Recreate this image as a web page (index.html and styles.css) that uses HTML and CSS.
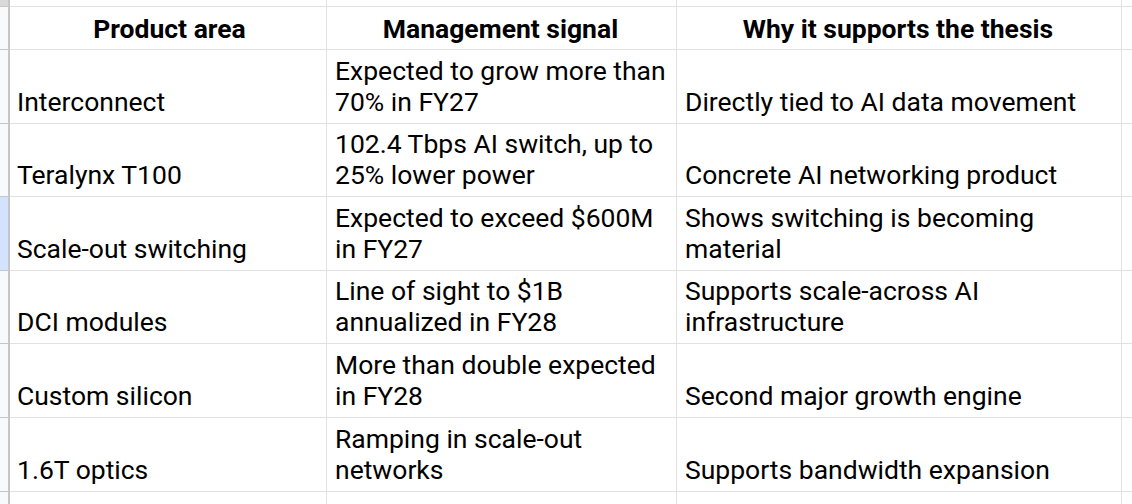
FILE: index.html
```html
<!DOCTYPE html>
<html>
<head>
<meta charset="utf-8">
<link rel="stylesheet" href="styles.css">
</head>
<body>
<div class="sheet">
  <div class="rh corner"></div><div class="c"></div><div class="c"></div><div class="c"></div><div class="c last"></div>

  <div class="rh"></div>
  <div class="c hd">Product area</div>
  <div class="c hd">Management signal</div>
  <div class="c hd">Why it supports the thesis</div>
  <div class="c last"></div>

  <div class="rh"></div>
  <div class="c">Interconnect</div>
  <div class="c">Expected to grow more than<br>70% in FY27</div>
  <div class="c">Directly tied to AI data movement</div>
  <div class="c last"></div>

  <div class="rh"></div>
  <div class="c">Teralynx T100</div>
  <div class="c">102.4 Tbps AI switch, up to<br>25% lower power</div>
  <div class="c">Concrete AI networking product</div>
  <div class="c last"></div>

  <div class="rh sel"></div>
  <div class="c">Scale-out switching</div>
  <div class="c">Expected to exceed $600M<br>in FY27</div>
  <div class="c">Shows switching is becoming<br>material</div>
  <div class="c last"></div>

  <div class="rh"></div>
  <div class="c">DCI modules</div>
  <div class="c">Line of sight to $1B<br>annualized in FY28</div>
  <div class="c">Supports scale-across AI<br>infrastructure</div>
  <div class="c last"></div>

  <div class="rh"></div>
  <div class="c">Custom silicon</div>
  <div class="c">More than double expected<br>in FY28</div>
  <div class="c">Second major growth engine</div>
  <div class="c last"></div>

  <div class="rh"></div>
  <div class="c">1.6T optics</div>
  <div class="c">Ramping in scale-out<br>networks</div>
  <div class="c">Supports bandwidth expansion</div>
  <div class="c last"></div>

  <div class="rh"></div><div class="c"></div><div class="c"></div><div class="c"></div><div class="c last"></div>
</div>
</body>
</html>
```

FILE: styles.css
```css
html, body {
  margin: 0;
  padding: 0;
  background: #ffffff;
}

body {
  width: 1132px;
  height: 504px;
  overflow: hidden;
  font-family: Roboto, "Liberation Sans", Arial, sans-serif;
  color: #000000;
}

.sheet {
  display: grid;
  grid-template-columns: 10px 317px 350px 445px 1fr;
  grid-template-rows: 7px 43px 74px 73px 74px 73px 74px 74px 30px;
  width: 1132px;
}

.rh {
  background: #f8f9fa;
  border-right: 2px solid #c4c7c5;
  border-bottom: 1px solid #c4c7c5;
}

.rh.corner {
  background: #d9d9d9;
}

.rh.sel {
  background: #d3e3fd;
}

.c {
  display: flex;
  align-items: flex-end;
  border-right: 1px solid #e1e1e1;
  border-bottom: 1px solid #e1e1e1;
  padding: 0 4px 6px 8px;
  font-size: 26.5px;
  line-height: 31px;
  overflow: hidden;
  white-space: nowrap;
}

.sheet > .c:nth-child(5n+2) {
  padding-left: 7px;
}

.c.last {
  border-right: none;
}

.c.hd {
  justify-content: center;
  font-weight: 700;
  padding: 0 4px 5px 2px;
}
```
